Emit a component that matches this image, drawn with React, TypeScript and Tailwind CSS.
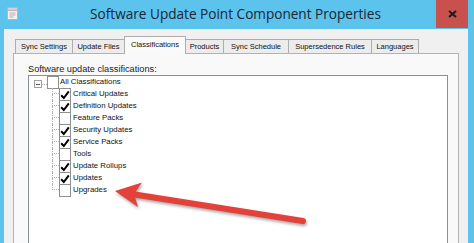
import React from 'react';

const tabs = [
  { label: 'Sync Settings', w: 'w-[58px]', active: false },
  { label: 'Update Files', w: 'w-[53px]', active: false },
  { label: 'Classifications', w: 'w-[62px]', active: true },
  { label: 'Products', w: 'w-[39px]', active: false },
  { label: 'Sync Schedule', w: 'w-[66px]', active: false },
  { label: 'Supersedence Rules', w: 'w-[84px]', active: false },
  { label: 'Languages', w: 'w-[48px]', active: false },
];

const items = [
  { label: 'Critical Updates', checked: true },
  { label: 'Definition Updates', checked: true },
  { label: 'Feature Packs', checked: false },
  { label: 'Security Updates', checked: true },
  { label: 'Service Packs', checked: true },
  { label: 'Tools', checked: false },
  { label: 'Update Rollups', checked: true },
  { label: 'Updates', checked: true },
  { label: 'Upgrades', checked: false },
];

const CheckBox: React.FC<{ checked: boolean }> = ({ checked }) => (
  <div className="w-[12px] h-[13px] -mb-px shrink-0 border border-[#8f8f8f] bg-white flex items-center justify-center">
    {checked && (
      <svg width="10" height="10" viewBox="0 0 10 10">
        <path d="M1.2 5.2 L3.8 8 L8.8 1.4" fill="none" stroke="#000" strokeWidth="2" />
      </svg>
    )}
  </div>
);

export default function App() {
  return (
    <div
      className="relative w-[474px] h-[243px] overflow-hidden bg-[#5cc3ec] flex flex-col"
      style={{ fontFamily: '"Liberation Sans", Arial, sans-serif' }}
    >
      {/* Title bar */}
      <div className="h-[29px] shrink-0 flex items-start">
        <div className="ml-[7px] mt-[7px] w-[11px] h-[13px]">
          <svg width="11" height="13" viewBox="0 0 11 13">
            <rect x="0.5" y="0.5" width="10" height="12" fill="#f4f1f1" stroke="#b9b2b4" />
            <rect x="0.5" y="0.5" width="10" height="3" fill="#e8c9cf" stroke="#b9b2b4" />
            <path d="M2.5 6 H8.5 M2.5 8 H8.5 M2.5 10 H6.5" stroke="#c9a5ad" />
          </svg>
        </div>
        <div
          className="flex-1 pl-[17px] h-[29px] flex items-center justify-center text-[13.6px] text-[#1b2535]"
          style={{ fontFamily: '"Open Sans", "Noto Sans", sans-serif' }}
        >
          Software Update Point Component Properties
        </div>
        <div className="w-[32px] h-[28px] mr-[6px] bg-[#c8514d] flex items-center justify-center">
          <svg width="9" height="8" viewBox="0 0 9 8">
            <path d="M1 1 L8 7 M8 1 L1 7" stroke="#1a1a1a" strokeWidth="2" />
          </svg>
        </div>
      </div>

      {/* Dialog body */}
      <div className="flex-1 ml-[4px] mr-[6px] bg-[#f0f0f0] pt-[7px] flex flex-col">
        <div className="pl-[11px] flex items-end">
          {tabs.map((t, i) => (
            <div
              key={t.label}
              className={
                (i > 0 ? '-ml-px ' : '') +
                t.w +
                (t.active
                  ? ' h-[18px] -mb-px relative z-10 bg-[#fafafa] pb-[2px]'
                  : ' h-[14px] bg-[#ececec]') +
                ' border border-b-0 border-[#adadad] flex items-center justify-center text-[7.5px] text-[#111] whitespace-nowrap'
              }
            >
              {t.label}
            </div>
          ))}
        </div>

        <div className="ml-[9px] w-[446px] flex-1 border border-b-0 border-[#b3b3b3] bg-[#f9f9f9] pl-[14px] pt-[9px] flex flex-col">
          <div className="h-[12px] leading-[12px] text-[9.2px] text-[#1a1a1a]">
            Software update classifications:
          </div>
          <div className="w-[420px] flex-1 border border-b-0 border-[#8a8e95] bg-white text-[7.8px] text-[#111]">
            {/* Parent row */}
            <div className="h-[12px] flex items-start">
              <div className="ml-[5px] mt-[4px] w-[8px] h-[8px] border border-[#a0a0a0] bg-white flex items-center justify-center">
                <div className="w-[4px] h-px bg-[#555]" />
              </div>
              <div className="w-[5px] mt-[8px] border-t border-dotted border-[#b0b0b0]" />
              <CheckBox checked={false} />
              <span className="ml-[1px] h-[12px] leading-[12px]">All Classifications</span>
            </div>
            {items.map((it, i) => (
              <div key={it.label} className="h-[12px] flex items-start">
                <div className="ml-[23px] w-[7px] h-[12px] flex flex-col">
                  <div className="h-[6px] border-l border-b border-dotted border-[#b0b0b0]" />
                  <div
                    className={
                      'h-[6px] border-l border-dotted ' +
                      (i < items.length - 1 ? 'border-[#b0b0b0]' : 'border-transparent')
                    }
                  />
                </div>
                <CheckBox checked={it.checked} />
                <span className="ml-[2px] h-[12px] leading-[12px]">{it.label}</span>
              </div>
            ))}
          </div>
        </div>
      </div>

      {/* Callout arrow */}
      <svg
        className="absolute inset-0 pointer-events-none"
        width="474"
        height="243"
        viewBox="0 0 474 243"
        style={{ filter: 'drop-shadow(1px 2px 1.5px rgba(0,0,0,0.35))' }}
      >
        <line x1="135" y1="194.5" x2="303" y2="221" stroke="#e4413b" strokeWidth="6" strokeLinecap="round" />
        <path d="M115 191 L142 182.5 L134 194 L138 207 Z" fill="#e4413b" />
      </svg>
    </div>
  );
}
